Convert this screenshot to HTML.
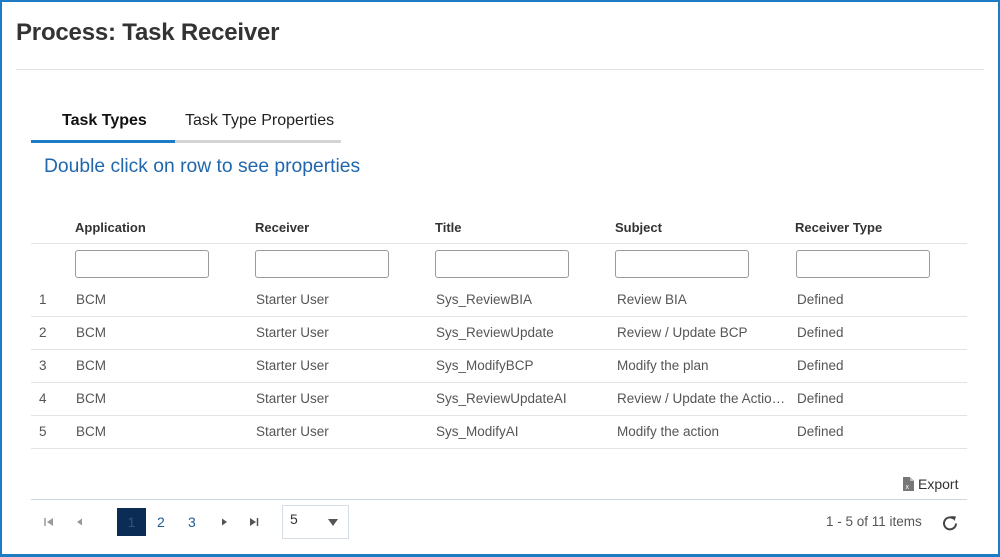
<!DOCTYPE html>
<html><head><style>
*{margin:0;padding:0;box-sizing:border-box}
body{width:1000px;height:557px;overflow:hidden;background:#fff;font-family:"Liberation Sans",Arial,sans-serif;position:relative}
.frame{position:absolute;left:0;top:0;width:1000px;height:557px;border:2px solid #1e7cc4;border-bottom-width:3px}
.a{position:absolute;white-space:nowrap}
h1{position:absolute;left:16px;top:19px;font-size:24px;font-weight:bold;color:#333;letter-spacing:-0.2px}
.hr{position:absolute;height:1px;background:#e0e0e0}
.th{position:absolute;top:220px;font-size:13px;font-weight:bold;color:#333}
.inp{position:absolute;top:250px;width:134px;height:28px;border:1px solid #9a9a9a;border-radius:3px}
.td{position:absolute;font-size:13.5px;color:#555}
.rl{position:absolute;left:31px;width:936px;height:1px;background:#e3e3e3}
</style></head><body>
<div class="frame"></div>
<h1>Process: Task Receiver</h1>
<div class="hr" style="left:16px;top:69px;width:968px"></div>
<div class="a" style="left:62px;top:112px;font-size:16px;font-weight:bold;color:#111">Task Types</div>
<div class="a" style="left:185px;top:112px;font-size:16px;color:#222">Task Type Properties</div>
<div class="a" style="left:31px;top:140px;width:144px;height:3px;background:#1e7cc4"></div>
<div class="a" style="left:175px;top:140px;width:166px;height:3px;background:#d4d4d4"></div>
<div class="a" style="left:44px;top:156px;font-size:19.3px;color:#1f66ad">Double click on row to see properties</div>

<div class="th" style="left:75px">Application</div>
<div class="th" style="left:255px">Receiver</div>
<div class="th" style="left:435px">Title</div>
<div class="th" style="left:615px">Subject</div>
<div class="th" style="left:795px">Receiver Type</div>
<div class="rl" style="top:243px"></div>
<div class="inp" style="left:75px"></div>
<div class="inp" style="left:255px"></div>
<div class="inp" style="left:435px"></div>
<div class="inp" style="left:615px"></div>
<div class="inp" style="left:796px"></div>

<div class="td" style="left:39px;top:292px">1</div><div class="td" style="left:76px;top:292px">BCM</div><div class="td" style="left:256px;top:292px">Starter User</div><div class="td" style="left:436px;top:292px">Sys_ReviewBIA</div><div class="td" style="left:617px;top:292px">Review BIA</div><div class="td" style="left:797px;top:292px">Defined</div>
<div class="rl" style="top:316px"></div>
<div class="td" style="left:39px;top:325px">2</div><div class="td" style="left:76px;top:325px">BCM</div><div class="td" style="left:256px;top:325px">Starter User</div><div class="td" style="left:436px;top:325px">Sys_ReviewUpdate</div><div class="td" style="left:617px;top:325px">Review / Update BCP</div><div class="td" style="left:797px;top:325px">Defined</div>
<div class="rl" style="top:349px"></div>
<div class="td" style="left:39px;top:358px">3</div><div class="td" style="left:76px;top:358px">BCM</div><div class="td" style="left:256px;top:358px">Starter User</div><div class="td" style="left:436px;top:358px">Sys_ModifyBCP</div><div class="td" style="left:617px;top:358px">Modify the plan</div><div class="td" style="left:797px;top:358px">Defined</div>
<div class="rl" style="top:382px"></div>
<div class="td" style="left:39px;top:391px">4</div><div class="td" style="left:76px;top:391px">BCM</div><div class="td" style="left:256px;top:391px">Starter User</div><div class="td" style="left:436px;top:391px">Sys_ReviewUpdateAI</div><div class="td" style="left:617px;top:391px">Review / Update the Actio…</div><div class="td" style="left:797px;top:391px">Defined</div>
<div class="rl" style="top:415px"></div>
<div class="td" style="left:39px;top:424px">5</div><div class="td" style="left:76px;top:424px">BCM</div><div class="td" style="left:256px;top:424px">Starter User</div><div class="td" style="left:436px;top:424px">Sys_ModifyAI</div><div class="td" style="left:617px;top:424px">Modify the action</div><div class="td" style="left:797px;top:424px">Defined</div>
<div class="rl" style="top:448px"></div>

<svg class="a" style="left:903px;top:477px" width="11" height="14" viewBox="0 0 11 14"><path d="M0 0h7l4 4v10H0z" fill="#777"/><path d="M7 0v4h4" fill="#bbb"/><text x="2.5" y="12" font-size="7" fill="#fff" font-family="Liberation Sans">x</text></svg>
<div class="a" style="left:918px;top:476px;font-size:14px;color:#333">Export</div>
<div class="a" style="left:31px;top:499px;width:936px;height:1px;background:#cdd8e3"></div>

<svg class="a" style="left:44px;top:517px" width="10" height="10"><path d="M1 1v8" stroke="#999" stroke-width="1.5"/><path d="M9 1L3 5l6 4z" fill="#999"/></svg>
<svg class="a" style="left:75px;top:517px" width="10" height="10"><path d="M7 1.5L2 5l5 3.5z" fill="#999"/></svg>
<div class="a" style="left:117px;top:508px;width:29px;height:28px;background:#0b2d55;color:#33557a;font-size:14px;text-align:center;line-height:28px">1</div>
<div class="a" style="left:157px;top:514px;font-size:14px;color:#1f5a95">2</div>
<div class="a" style="left:188px;top:514px;font-size:14px;color:#1f5a95">3</div>
<svg class="a" style="left:219px;top:517px" width="10" height="10"><path d="M3 1.5L8 5 3 8.5z" fill="#555"/></svg>
<svg class="a" style="left:249px;top:517px" width="10" height="10"><path d="M1 1l6 4-6 4z" fill="#555"/><path d="M8.5 1v8" stroke="#555" stroke-width="1.5"/></svg>
<div class="a" style="left:282px;top:505px;width:67px;height:34px;border:1px solid #d6dde5"></div>
<div class="a" style="left:290px;top:511px;font-size:14px;color:#333">5</div>
<svg class="a" style="left:328px;top:519px" width="11" height="8"><path d="M0 0h10L5 7z" fill="#555"/></svg>
<div class="a" style="left:826px;top:514px;font-size:13.5px;color:#555">1 - 5 of 11 items</div>
<svg class="a" style="left:941px;top:514px" width="18" height="18" viewBox="0 0 18 18"><path d="M12.5 4.5A6 6 0 1 0 15 9.5" fill="none" stroke="#444" stroke-width="2"/><path d="M10 2l5 .5-1.5 4.5z" fill="#444"/></svg>
</body></html>
